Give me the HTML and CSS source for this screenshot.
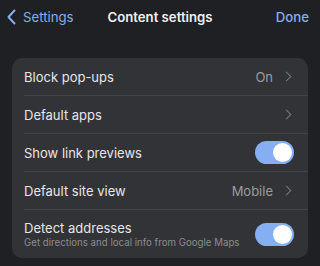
FILE: index.html
```html
<!DOCTYPE html>
<html lang="en">
<head>
  <meta charset="UTF-8" />
  <title>Content settings</title>
  <meta name="viewport" content="width=device-width, initial-scale=1" />
  <link rel="stylesheet" href="styles.css">
</head>
<body>

<header class="topbar">
  <a class="back" href="#">
    <svg width="9" height="16" viewBox="0 0 9 16"><path d="M7.5 1.5 L1.5 8 L7.5 14.5" fill="none" stroke="currentColor" stroke-width="2" stroke-linecap="round" stroke-linejoin="round"/></svg>
    Settings
  </a>
  <div class="title">Content settings</div>
  <a class="done" href="#">Done</a>
</header>

<main class="card">
  <div class="row">
    <span class="label">Block pop-ups</span>
    <span class="value">On</span>
    <span class="chev"></span>
  </div>
  <div class="row">
    <span class="label">Default apps</span>
    <span class="chev"></span>
  </div>
  <div class="row">
    <span class="label">Show link previews</span>
    <span class="toggle"></span>
  </div>
  <div class="row">
    <span class="label">Default site view</span>
    <span class="value">Mobile</span>
    <span class="chev"></span>
  </div>
  <div class="row tall">
    <div class="label">
      Detect addresses
      <div class="sub">Get directions and local info from Google Maps</div>
    </div>
    <span class="toggle"></span>
  </div>
</main>

</body>
</html>
```

FILE: styles.css
```css
body {
  margin: 0;
  background: #1f2023;
  color: #e6e6e8;
  font-family: Inter, "Noto Sans", sans-serif;
  width: 320px;
  height: 266px;
  overflow: hidden;
}
.topbar {
  height: 34px;
  padding: 0 11px 0 7px;
  display: flex;
  align-items: center;
  position: relative;
  font-size: 13.2px;
}
.topbar a {
  color: #86aeee;
  text-decoration: none;
}
.back {
  display: flex;
  align-items: center;
  gap: 7px;
}
.title {
  position: absolute;
  left: 0; right: 0;
  text-align: center;
  font-weight: 600;
  color: #f0f0f2;
  pointer-events: none;
}
.done {
  margin-left: auto;
  font-weight: 500;
}
.card {
  margin: 24px 12px 0;
  background: #323336;
  border-radius: 10px;
  padding-left: 12px;
}
.row {
  display: flex;
  align-items: center;
  height: 37px;
  padding-right: 16px;
  border-bottom: 1px solid #424346;
  font-size: 13px;
}
.row:last-child {
  border-bottom: none;
}
.row.tall {
  height: 48px;
}
.label {
  flex: 1;
}
.sub {
  font-size: 9.7px;
  color: #8b8c8f;
  margin-top: 1px;
}
.value {
  color: #9a9b9e;
  margin-right: 10px;
}
.chev {
  width: 6px;
  height: 6px;
  border-top: 1.5px solid #77787c;
  border-right: 1.5px solid #77787c;
  transform: rotate(45deg);
  margin-right: 2px;
}
.toggle {
  width: 39px;
  height: 23px;
  border-radius: 12px;
  background: #86aef2;
  position: relative;
  margin-right: -2px;
}
.toggle::after {
  content: "";
  position: absolute;
  right: 2px; top: 2px;
  width: 19px;
  height: 19px;
  border-radius: 50%;
  background: #fff;
}
```
